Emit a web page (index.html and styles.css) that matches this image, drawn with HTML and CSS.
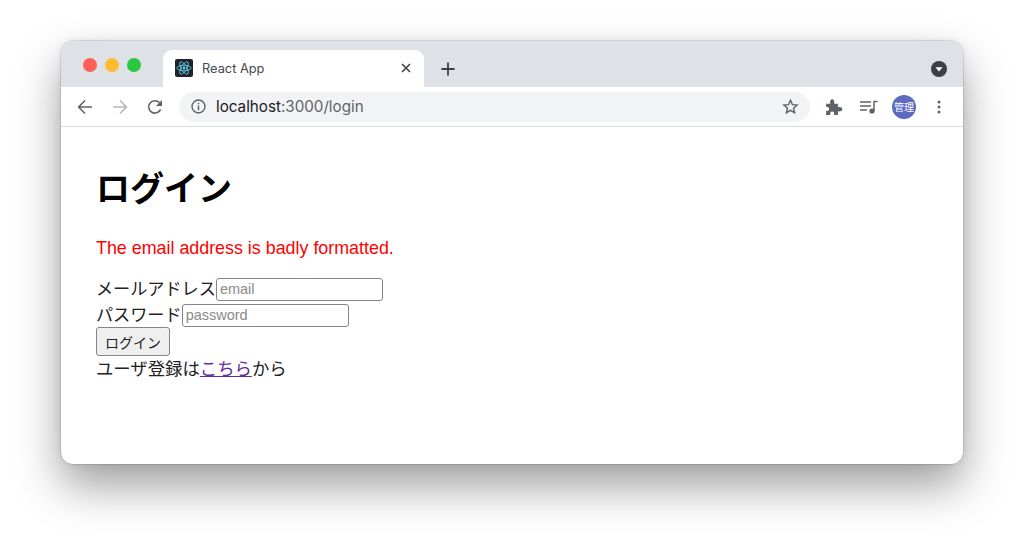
FILE: index.html
```html
<!DOCTYPE html>
<html lang="ja">
<head>
  <meta charset="UTF-8">
  <meta name="viewport" content="width=device-width, initial-scale=1.0">
  <title>React App</title>
  <link rel="stylesheet" href="styles.css">
</head>
<body>
  <div class="window">
    <div class="tabstrip">
      <div class="lights">
        <span class="light red"></span>
        <span class="light yellow"></span>
        <span class="light green"></span>
      </div>
      <div class="tab">
        <svg class="favicon" width="18" height="18" viewBox="0 0 18 18">
          <rect width="18" height="18" rx="2" fill="#20232a"/>
          <g fill="none" stroke="#61dafb" stroke-width="0.8">
            <ellipse cx="9" cy="9" rx="7" ry="2.8"/>
            <ellipse cx="9" cy="9" rx="7" ry="2.8" transform="rotate(60 9 9)"/>
            <ellipse cx="9" cy="9" rx="7" ry="2.8" transform="rotate(120 9 9)"/>
          </g>
          <circle cx="9" cy="9" r="1.4" fill="#61dafb"/>
        </svg>
        <span class="tab-title">React App</span>
        <svg class="tab-close" width="12" height="12" viewBox="0 0 12 12">
          <path d="M2 2l8 8M10 2l-8 8" stroke="#45484c" stroke-width="1.7" fill="none"/>
        </svg>
      </div>
      <svg class="new-tab" width="14" height="14" viewBox="0 0 14 14">
        <path d="M7 .5v13M.5 7h13" stroke="#3c4043" stroke-width="1.8" fill="none"/>
      </svg>
      <svg class="tab-search" width="16" height="16" viewBox="0 0 16 16">
        <circle cx="8" cy="8" r="8" fill="#3c4043"/>
        <path d="M4.4 6.2h7.2L8 10.6z" fill="#fff"/>
      </svg>
    </div>

    <div class="toolbar">
      <svg class="nav-icon" width="16" height="16" viewBox="0 0 16 16">
        <path d="M15 8H2M8 1.5L1.6 8 8 14.5" stroke="#5f6368" stroke-width="1.6" fill="none"/>
      </svg>
      <svg class="nav-icon" width="16" height="16" viewBox="0 0 16 16">
        <path d="M1 8h13M8 1.5L14.4 8 8 14.5" stroke="#b4b7bb" stroke-width="1.6" fill="none"/>
      </svg>
      <svg class="nav-icon" width="16" height="16" viewBox="0 0 16 16">
        <path d="M13.6 10.4A6.2 6.2 0 1 1 12.4 3.6" stroke="#5f6368" stroke-width="1.6" fill="none"/>
        <path d="M15 1v6H9z" fill="#5f6368"/>
      </svg>
      <div class="omnibox">
        <svg width="15" height="15" viewBox="0 0 15 15">
          <circle cx="7.5" cy="7.5" r="6.5" stroke="#5f6368" stroke-width="1.4" fill="none"/>
          <path d="M6.8 6.6h1.4v4.6H6.8zM6.8 3.8h1.4v1.5H6.8z" fill="#5f6368"/>
        </svg>
        <span class="url"><span class="host">localhost</span>:3000/login</span>
        <svg class="star" width="17" height="17" viewBox="0 0 24 24">
          <path d="M12 3.2l2.7 6.1 6.6.6-5 4.4 1.5 6.5L12 17.4l-5.8 3.4 1.5-6.5-5-4.4 6.6-.6z" stroke="#5f6368" stroke-width="2" fill="none"/>
        </svg>
      </div>
      <svg class="puzzle" width="18" height="18" viewBox="0 0 16 16">
        <path d="M1 5h3.600C4.200 2.600 5 1 6.400 1s2.200 1.600 1.800 4h3.300v3.200c2.300-.4 3.900.4 3.900 1.800s-1.600 2.200-3.900 1.800V15H8.100c.3-2-.4-3-1.700-3s-2 1-1.700 3H1v-3.600c1.600.3 2.600-.4 2.600-1.700S2.600 7.800 1 8.100z" fill="#5f6368"/>
      </svg>
      <svg class="media" width="18" height="14" viewBox="0 0 18 14">
        <path d="M0 2h11M0 6h11M0 10h7" stroke="#5f6368" stroke-width="1.5" fill="none"/>
        <path d="M14 1v10M14 1.500h3.500" stroke="#5f6368" stroke-width="1.5" fill="none"/>
        <circle cx="12" cy="11" r="2.600" fill="#5f6368"/>
      </svg>
      <div class="avatar">管理</div>
      <svg class="menu" width="4" height="14" viewBox="0 0 4 14">
        <circle cx="2" cy="2" r="1.500" fill="#5f6368"/>
        <circle cx="2" cy="7" r="1.500" fill="#5f6368"/>
        <circle cx="2" cy="12" r="1.500" fill="#5f6368"/>
      </svg>
    </div>

    <div class="page">
      <h1>ログイン</h1>
      <p class="error">The email address is badly formatted.</p>
      <form class="login-form">
        <div class="row">メールアドレス<input type="text" class="field" placeholder="email"></div>
        <div class="row">パスワード<input type="password" class="field" placeholder="password"></div>
        <div class="row button-row"><button type="button" class="submit">ログイン</button></div>
        <div class="row signup-row">ユーザ登録は<a href="#" class="link">こちら</a>から</div>
      </form>
    </div>
  </div>
</body>
</html>
```

FILE: styles.css
```css
* {
  box-sizing: border-box;
}

html, body {
  height: 545px;
  overflow: hidden;
}

body {
  margin: 0;
  padding: 41px 0 0 61px;
  background: #fff;
  color: #000;
  font-family: "Liberation Sans", "Noto Sans CJK JP", sans-serif;
}

.window {
  width: 902px;
  height: 423px;
  background: #fff;
  border-radius: 12px;
  overflow: hidden;
  box-shadow: 0 0 0 0.5px rgba(0, 0, 0, 0.2), 0 22px 46px rgba(0, 0, 0, 0.38), 0 0 10px rgba(0, 0, 0, 0.08);
}

/* tab strip */
.tabstrip {
  height: 46px;
  background: #dee1e6;
  display: flex;
  align-items: flex-end;
  position: relative;
}

.lights {
  display: flex;
  gap: 8px;
  width: 102px;
  padding: 0 0 15px 22px;
}

.light {
  width: 14px;
  height: 14px;
  border-radius: 50%;
}

.red { background: #ff5f57; }
.yellow { background: #febc2e; }
.green { background: #28c840; }

.tab {
  width: 261px;
  height: 37px;
  background: #fff;
  border-radius: 9px 9px 0 0;
  display: flex;
  align-items: center;
  padding: 0 12px 1px 12px;
}

.favicon {
  flex: none;
}

.tab-title {
  flex: 1;
  margin-left: 9px;
  font-family: "Inter", "Liberation Sans", sans-serif;
  font-size: 12.8px;
  color: #45484c;
}

.new-tab {
  margin: 0 0 11px 17px;
}

.tab-search {
  margin: 0 16px 10px auto;
}

/* toolbar */
.toolbar {
  height: 40px;
  border-bottom: 1px solid #d9dbde;
  display: flex;
  align-items: center;
  padding-left: 16px;
}

.nav-icon {
  margin-right: 19px;
  flex: none;
}

.omnibox {
  width: 631px;
  height: 30px;
  margin-left: -3px;
  background: #f1f3f4;
  border-radius: 15px;
  display: flex;
  align-items: center;
  padding: 0 11px 0 12px;
}

.url {
  flex: 1;
  margin-left: 10px;
  font-family: "Inter", "Liberation Sans", sans-serif;
  font-size: 15.2px;
  color: #5f6368;
}

.host {
  color: #202124;
}

.puzzle {
  margin-left: 15px;
  flex: none;
}

.media {
  margin-left: 17px;
  flex: none;
}

.avatar {
  width: 24px;
  height: 24px;
  margin-left: 14px;
  border-radius: 50%;
  background: #5c6bc0;
  color: #fff;
  font-family: "Noto Sans CJK JP", sans-serif;
  font-size: 10px;
  line-height: 24px;
  text-align: center;
  flex: none;
}

.menu {
  margin-left: 21px;
  flex: none;
}

/* page */
.page {
  padding: 37px 35px 0;
  font-size: 17.14px;
  color: #222;
}

h1 {
  margin: 0;
  font-size: 34px;
  line-height: 50px;
  font-weight: 700;
  color: #000;
}

.error {
  margin: 22px 0 16px;
  font-size: 17.86px;
  line-height: 24px;
  color: #ff0000;
}

.row {
  line-height: 26px;
  display: flex;
  align-items: center;
}

.button-row {
  margin-top: -1px;
}

.signup-row {
  font-size: 17.36px;
}

.field {
  width: 167px;
  height: 23px;
  padding: 1px 3px;
  border: 1px solid #858585;
  border-radius: 3px;
  font-family: "Liberation Sans", sans-serif;
  font-size: 14.5px;
  background: #fff;
}

.field::placeholder {
  color: #8a8a8a;
}

.submit {
  width: 74px;
  height: 29px;
  padding: 0;
  border: 1px solid #858585;
  border-radius: 3px;
  background: #efefef;
  color: #222;
  font-family: "Noto Sans CJK JP", sans-serif;
  font-size: 14px;
}

.link {
  color: #5e2ca5;
}
```
